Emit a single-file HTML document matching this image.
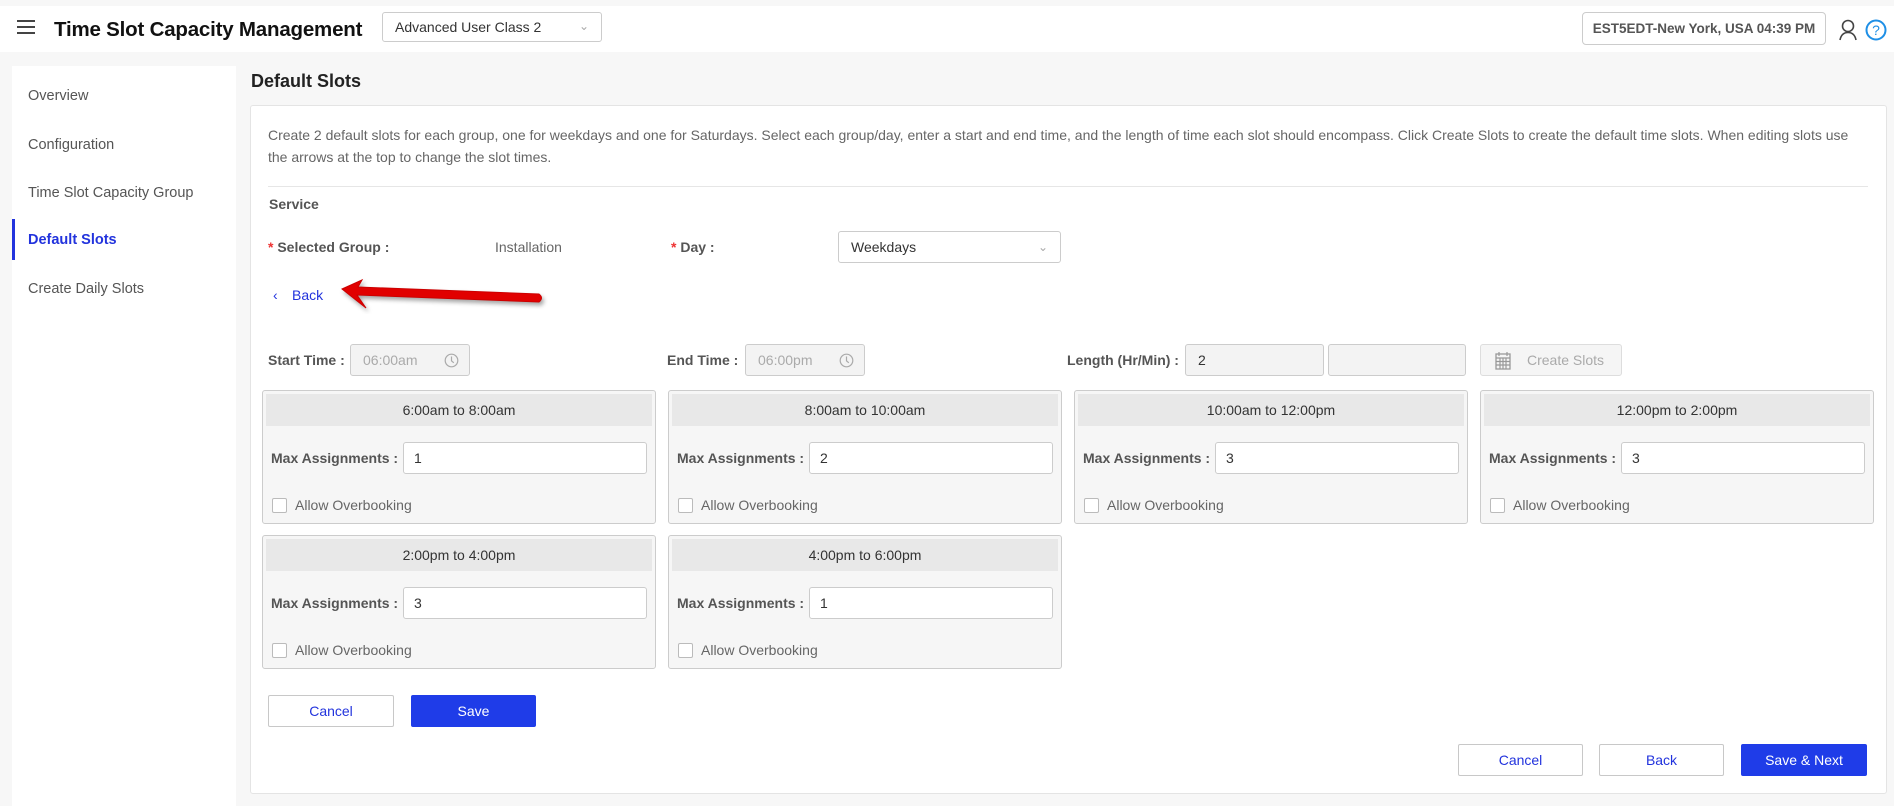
<!DOCTYPE html>
<html><head><meta charset="utf-8"><style>
*{box-sizing:border-box;margin:0;padding:0}
body{width:1894px;height:802px;background:#f7f7f7;font-family:"Liberation Sans",Arial,sans-serif;position:relative;overflow:hidden;color:#333}
.a{position:absolute}
.hdr{left:0;top:6px;width:1894px;height:46px;background:#fff}
.side{left:12px;top:66px;width:224px;height:740px;background:#fff}
.nav{left:28px;font-size:14.5px;color:#555}
.card{left:250px;top:105px;width:1637px;height:689px;background:#fff;border:1px solid #e4e4e4;border-radius:3px}
.lbl{font-size:14px;font-weight:bold;color:#555}
.inp{border:1px solid #ccc;border-radius:3px;background:#f3f3f3;font-size:14px;color:#aaa;padding-left:12px;display:flex;align-items:center}
.slot{width:394px;height:134px;background:#f6f6f6;border:1px solid #ccc;border-radius:3px}
.slot .h{position:absolute;left:3px;top:3px;right:3px;height:32px;background:#e8e8e8;text-align:center;line-height:32px;font-size:14px;color:#333}
.slot .m{position:absolute;left:8px;top:59px;font-size:14px;font-weight:bold;color:#555}
.slot .i{position:absolute;left:140px;top:51px;width:244px;height:32px;background:#fff;border:1px solid #ccc;border-radius:3px;font-size:14px;line-height:30px;padding-left:10px;color:#333}
.slot .c{position:absolute;left:9px;top:107px;width:15px;height:15px;border:1px solid #bbb;border-radius:2px;background:#fff}
.slot .o{position:absolute;left:32px;top:106px;font-size:14px;color:#666}
.btn{height:32px;border:1px solid #c8c8c8;border-radius:2px;background:#fff;color:#2233dd;font-size:14px;display:flex;align-items:center;justify-content:center}
.btn.p{background:#1f3ce8;border-color:#1f3ce8;color:#fff}
.clk{position:absolute;right:10px;top:8px}
</style></head><body>
<div class="a hdr"></div>
<div class="a" style="left:17px;top:20px;width:18px;height:2px;background:#444;box-shadow:0 6px 0 #444,0 12px 0 #444"></div>
<div class="a" style="left:54px;top:18px;font-size:20.5px;font-weight:bold;color:#111;letter-spacing:-0.2px">Time Slot Capacity Management</div>
<div class="a" style="left:382px;top:12px;width:220px;height:30px;border:1px solid #ccc;border-radius:3px;background:#fff;font-size:14px;line-height:28px;padding-left:12px;color:#333">Advanced User Class 2<span style="position:absolute;right:12px;top:-1px;color:#aaa;font-size:12px">&#8964;</span></div>
<div class="a" style="left:1582px;top:12px;width:244px;height:33px;border:1px solid #ccc;border-radius:4px;background:#fff;font-size:13.5px;font-weight:bold;line-height:31px;text-align:center;color:#555">EST5EDT-New York, USA 04:39 PM</div>
<svg class="a" style="left:1838px;top:19px" width="20" height="22" viewBox="0 0 20 22"><circle cx="10" cy="7" r="5.5" fill="none" stroke="#444" stroke-width="1.6"/><path d="M2 21c1-5 4-7.5 8-7.5s7 2.5 8 7.5" fill="none" stroke="#444" stroke-width="1.6"/></svg>
<svg class="a" style="left:1865px;top:19px" width="22" height="22" viewBox="0 0 22 22"><circle cx="11" cy="11" r="9.5" fill="none" stroke="#1e8fe6" stroke-width="2"/><text x="11" y="16" text-anchor="middle" font-size="14" font-family="Liberation Sans" fill="#1e8fe6">?</text></svg>

<div class="a side"></div>
<div class="a nav" style="top:88px">Overview</div>
<div class="a nav" style="top:137px">Configuration</div>
<div class="a nav" style="top:185px">Time Slot Capacity Group</div>
<div class="a" style="left:12px;top:219px;width:3px;height:41px;background:#2233dd"></div>
<div class="a nav" style="top:232px;color:#2233dd;font-weight:bold">Default Slots</div>
<div class="a nav" style="top:281px">Create Daily Slots</div>

<div class="a" style="left:251px;top:71px;font-size:18px;font-weight:bold;color:#222">Default Slots</div>
<div class="a card"></div>
<div class="a" style="left:268px;top:124px;width:1600px;font-size:14px;line-height:22px;color:#666">Create 2 default slots for each group, one for weekdays and one for Saturdays. Select each group/day, enter a start and end time, and the length of time each slot should encompass. Click Create Slots to create the default time slots. When editing slots use the arrows at the top to change the slot times.</div>
<div class="a" style="left:268px;top:186px;width:1600px;height:1px;background:#e6e6e6"></div>
<div class="a lbl" style="left:269px;top:196px">Service</div>
<div class="a lbl" style="left:268px;top:239px"><span style="color:#e33">*</span> Selected Group :</div>
<div class="a" style="left:495px;top:239px;font-size:14px;color:#666">Installation</div>
<div class="a lbl" style="left:671px;top:239px"><span style="color:#e33">*</span> Day :</div>
<div class="a" style="left:838px;top:231px;width:223px;height:32px;border:1px solid #ccc;border-radius:3px;background:#fff;font-size:14px;line-height:30px;padding-left:12px;color:#333">Weekdays<span style="position:absolute;right:12px;top:0;color:#aaa;font-size:12px">&#8964;</span></div>
<div class="a" style="left:273px;top:287px;font-size:14px;color:#2233dd">&#8249;</div>
<div class="a" style="left:292px;top:287px;font-size:14px;color:#2233dd">Back</div>
<svg class="a" style="left:336px;top:278px" width="212" height="36" viewBox="0 0 212 36"><path d="M6 11 L26 2 L22 9 L203 16 Q208 20 203 24 L21 17 L30 30 Z" fill="#e10000" stroke="#c00" stroke-width="1" style="filter:drop-shadow(2px 3px 2px rgba(0,0,0,.35))"/></svg>

<div class="a lbl" style="left:268px;top:352px">Start Time :</div>
<div class="a inp" style="left:350px;top:344px;width:120px;height:32px">06:00am<svg class="clk" width="15" height="15" viewBox="0 0 15 15"><circle cx="7.5" cy="7.5" r="6.3" fill="none" stroke="#aaa" stroke-width="1.2"/><path d="M7.5 3.5v4.3l2.3 2" fill="none" stroke="#aaa" stroke-width="1.2"/></svg></div>
<div class="a lbl" style="left:667px;top:352px">End Time :</div>
<div class="a inp" style="left:745px;top:344px;width:120px;height:32px">06:00pm<svg class="clk" width="15" height="15" viewBox="0 0 15 15"><circle cx="7.5" cy="7.5" r="6.3" fill="none" stroke="#aaa" stroke-width="1.2"/><path d="M7.5 3.5v4.3l2.3 2" fill="none" stroke="#aaa" stroke-width="1.2"/></svg></div>
<div class="a lbl" style="left:1067px;top:352px">Length (Hr/Min) :</div>
<div class="a inp" style="left:1185px;top:344px;width:139px;height:32px;color:#333">2</div>
<div class="a inp" style="left:1328px;top:344px;width:138px;height:32px"></div>
<div class="a" style="left:1480px;top:344px;width:142px;height:32px;border:1px solid #ddd;border-radius:3px;background:#f5f5f5;font-size:14px;color:#aaa;line-height:30px;padding-left:46px">Create Slots
<svg style="position:absolute;left:14px;top:6px" width="16" height="19" viewBox="0 0 16 19"><rect x="1" y="3" width="14" height="15" fill="none" stroke="#999" stroke-width="1.3"/><path d="M1 7h14M1 10.5h14M1 14h14M5 7v11M8 7v11M11 7v11M4 1v4M12 1v4" stroke="#999" stroke-width="1.2"/></svg></div>

<div class="a slot" style="left:262px;top:390px"><div class="h">6:00am to 8:00am</div><div class="m">Max Assignments :</div><div class="i">1</div><div class="c"></div><div class="o">Allow Overbooking</div></div>
<div class="a slot" style="left:668px;top:390px"><div class="h">8:00am to 10:00am</div><div class="m">Max Assignments :</div><div class="i">2</div><div class="c"></div><div class="o">Allow Overbooking</div></div>
<div class="a slot" style="left:1074px;top:390px"><div class="h">10:00am to 12:00pm</div><div class="m">Max Assignments :</div><div class="i">3</div><div class="c"></div><div class="o">Allow Overbooking</div></div>
<div class="a slot" style="left:1480px;top:390px"><div class="h">12:00pm to 2:00pm</div><div class="m">Max Assignments :</div><div class="i">3</div><div class="c"></div><div class="o">Allow Overbooking</div></div>
<div class="a slot" style="left:262px;top:535px"><div class="h">2:00pm to 4:00pm</div><div class="m">Max Assignments :</div><div class="i">3</div><div class="c"></div><div class="o">Allow Overbooking</div></div>
<div class="a slot" style="left:668px;top:535px"><div class="h">4:00pm to 6:00pm</div><div class="m">Max Assignments :</div><div class="i">1</div><div class="c"></div><div class="o">Allow Overbooking</div></div>

<div class="a btn" style="left:268px;top:695px;width:126px">Cancel</div>
<div class="a btn p" style="left:411px;top:695px;width:125px">Save</div>
<div class="a btn" style="left:1458px;top:744px;width:125px">Cancel</div>
<div class="a btn" style="left:1599px;top:744px;width:125px">Back</div>
<div class="a btn p" style="left:1741px;top:744px;width:126px">Save &amp; Next</div>
</body></html>
